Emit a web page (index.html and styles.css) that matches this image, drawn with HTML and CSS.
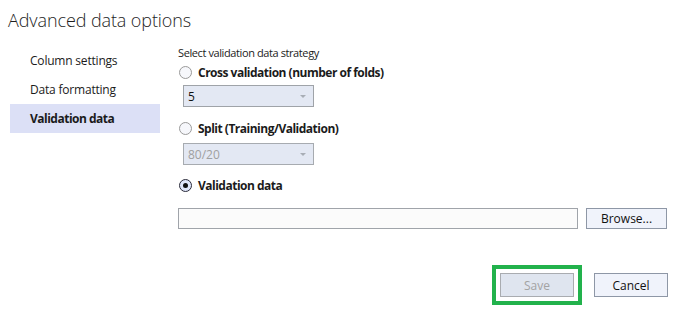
FILE: index.html
```html
<!DOCTYPE html>
<html lang="en">
<head>
    <meta charset="UTF-8">
    <title>Advanced data options</title>
    <link rel="stylesheet" href="styles.css">
</head>
<body>
    <div class="dialog">
        <h1>Advanced data options</h1>
        <div class="layout">
            <!-- left navigation -->
            <ul class="nav">
                <li>Column settings</li>
                <li>Data formatting</li>
                <li class="active">Validation data</li>
            </ul>
            <div class="content">
                <div class="caption">Select validation data strategy</div>
                <label class="radio-row">
                    <span class="radio"></span>
                    <span>Cross validation (number of folds)</span>
                </label>
                <div class="combo">
                    <span>5</span>
                    <span class="arrow"></span>
                </div>
                <label class="radio-row split">
                    <span class="radio"></span>
                    <span>Split (Training/Validation)</span>
                </label>
                <div class="combo disabled">
                    <span>80/20</span>
                    <span class="arrow"></span>
                </div>
                <label class="radio-row valid">
                    <span class="radio checked"></span>
                    <span>Validation data</span>
                </label>
                <div class="file-row">
                    <div class="file-input"></div>
                    <button class="btn browse">Browse...</button>
                </div>
            </div>
        </div>
        <div class="footer">
            <span class="focus-ring">
                <button class="btn save" disabled>Save</button>
            </span>
            <button class="btn cancel">Cancel</button>
        </div>
    </div>
</body>
</html>
```

FILE: styles.css
```css
* {
    box-sizing: border-box;
    margin: 0;
    padding: 0;
}

body {
    background: #ffffff;
    color: #1b1b1b;
    font-family: "Open Sans", "Liberation Sans", sans-serif;
    font-size: 12px;
}

.dialog {
    width: 683px;
    height: 310px;
    padding: 8px 0 0 8px;
}

h1 {
    font-weight: 300;
    font-size: 18px;
    line-height: 24px;
    color: #1e1e1e;
    letter-spacing: -0.1px;
}

.layout {
    display: flex;
    margin-top: 14px;
}

.nav {
    list-style: none;
    width: 150px;
    margin-left: 2px;
}

.nav li {
    height: 29px;
    line-height: 29px;
    padding-left: 20px;
    font-size: 12px;
    letter-spacing: -0.2px;
}

.nav li.active {
    background: #dce0f6;
    font-weight: 700;
    letter-spacing: -0.5px;
}

.content {
    margin-left: 18px;
    width: 490px;
}

.caption {
    height: 14px;
    line-height: 14px;
    font-size: 11px;
    letter-spacing: -0.4px;
}

.radio-row {
    display: flex;
    align-items: center;
    gap: 6px;
    height: 24px;
    font-weight: 700;
    letter-spacing: -0.5px;
    padding-left: 1px;
}

.radio-row.split {
    margin-top: 9px;
}

.radio-row.valid {
    margin-top: 8px;
}

.radio {
    width: 13px;
    height: 13px;
    border-radius: 50%;
    border: 1px solid #9a9a9a;
    background: #f6f7fb;
    position: relative;
}

.radio.checked {
    border-color: #2b2b3a;
    background: #dfe6fa;
}

.radio.checked::after {
    content: "";
    position: absolute;
    left: 3px;
    top: 3px;
    width: 5px;
    height: 5px;
    border-radius: 50%;
    background: #111;
}

.combo {
    display: flex;
    align-items: center;
    justify-content: space-between;
    width: 131px;
    height: 22px;
    margin: 1px 0 0 5px;
    padding: 0 7px 0 4px;
    border: 1px solid #9fa3a8;
    background: #e3e8f3;
    color: #111;
}

.combo.disabled {
    margin-top: 3px;
    color: #a0a0a0;
    border-color: #a7abb0;
}

.arrow {
    width: 0;
    height: 0;
    border-left: 3px solid transparent;
    border-right: 3px solid transparent;
    border-top: 3px solid #a8adb5;
}

.file-row {
    display: flex;
    margin-top: 11px;
    gap: 8px;
}

.file-input {
    width: 400px;
    height: 21px;
    border: 1px solid #a0a4aa;
    background: #fbfbfb;
}

.btn {
    font-family: "Open Sans", "Liberation Sans", sans-serif;
    font-size: 12px;
    color: #111;
    background: #f0f3fb;
    border: 1px solid #8e97a6;
}

.browse {
    width: 81px;
    height: 21px;
}

.footer {
    display: flex;
    align-items: center;
    justify-content: flex-end;
    margin-top: 36px;
    padding-right: 15px;
    gap: 12px;
}

.focus-ring {
    display: flex;
    padding: 4px;
    border: 4px solid #22b24c;
}

.save {
    width: 74px;
    height: 24px;
    color: #a3a3a3;
    background: #dfe5ef;
    border-color: #a9acb0;
}

.cancel {
    width: 74px;
    height: 24px;
}
```
